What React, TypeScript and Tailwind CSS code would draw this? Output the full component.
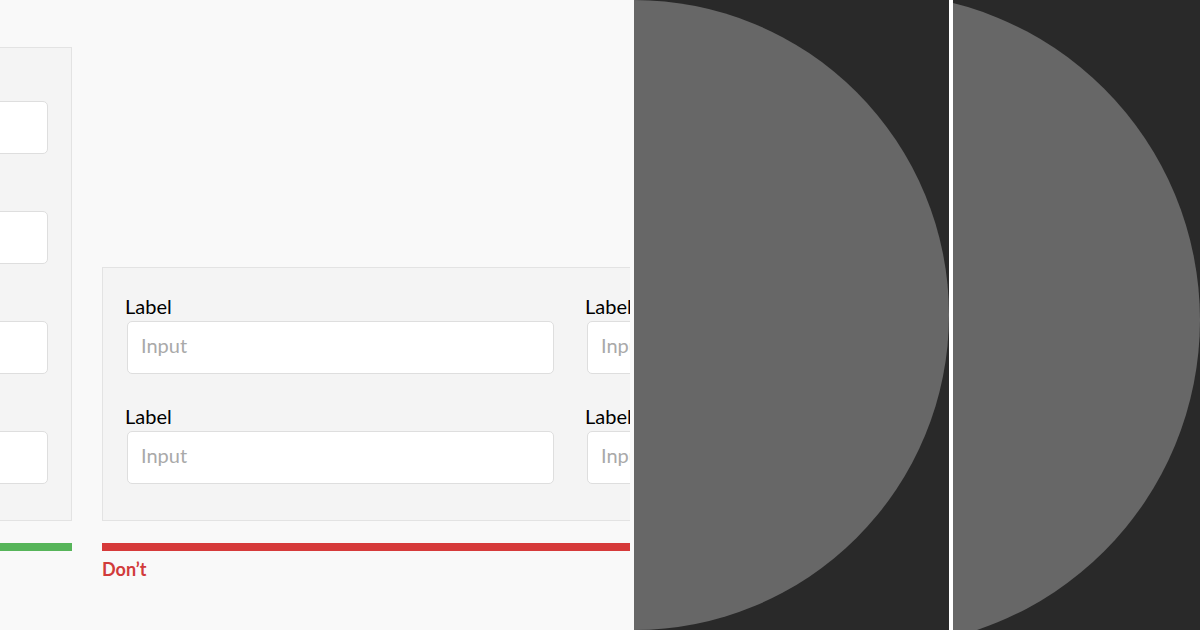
import React from "react";

// One label + input pair, as used in both example forms
const Field = ({ className = "" }: { className?: string }) => (
  <div className={`flex flex-col ${className}`}>
    <label className="h-6 text-[20px] leading-6 text-black">Label</label>
    <input
      readOnly
      placeholder="Input"
      className="mt-[3px] ml-[2px] h-[53px] w-[calc(100%-2px)] rounded-[5px] border border-[#dedede] bg-white px-[13px] pb-[6px] text-[20px] text-black outline-none placeholder:text-[#a9a9a9]"
    />
  </div>
);

const Half = ({ cx, cy, r, width }: { cx: number; cy: number; r: number; width: number }) => (
  <div className="h-full shrink-0 overflow-hidden bg-[#292929]" style={{ width }}>
    <svg width={width} height={630} viewBox={`0 0 ${width} 630`}>
      <circle cx={cx} cy={cy} r={r} fill="#676767" />
    </svg>
  </div>
);

export default function App() {
  return (
    <div className="flex h-[630px] w-[1200px] overflow-hidden bg-[#f9f9f9] font-['Lato',sans-serif]">
      {/* Do / Don't comparison, cropped */}
      <div className="h-full w-[634px] shrink-0">
        <div className="flex h-full w-[630px] items-start overflow-hidden">
          {/* Do: single column */}
          <div className="ml-[-388px] flex w-[460px] shrink-0 flex-col pt-[47px]">
            <div className="flex flex-col gap-[30px] border border-[#e3e3e3] bg-[#f4f4f4] pt-[26px] pr-[23px] pb-[36px] pl-[22px]">
              <Field />
              <Field />
              <Field />
              <Field />
            </div>
            <div className="mt-[22px] h-2 bg-[#57b55a]" />
            <span className="mt-[7px] text-[18px] font-bold text-[#3f9e42]">Do</span>
          </div>

          {/* Don't: two columns */}
          <div className="ml-[30px] flex w-[920px] shrink-0 flex-col pt-[267px]">
            <div className="flex flex-col gap-[30px] border border-[#e3e3e3] bg-[#f4f4f4] pt-[26px] pb-[36px] pl-[22px]">
              <div className="flex gap-[31px]">
                <Field className="w-[429px]" />
                <Field className="w-[429px]" />
              </div>
              <div className="flex gap-[31px]">
                <Field className="w-[429px]" />
                <Field className="w-[429px]" />
              </div>
            </div>
            <div className="mt-[22px] h-2 bg-[#d63a3a]" />
            <span className="mt-[7px] text-[18px] font-bold leading-[22px] text-[#d13b3b]">Don’t</span>
          </div>
        </div>
      </div>

      {/* Dark half-circle panels */}
      <Half width={315} cx={0} cy={315} r={315} />
      <div className="h-full w-1 shrink-0 bg-white" />
      <Half width={247} cx={-80} cy={320} r={327} />
    </div>
  );
}
